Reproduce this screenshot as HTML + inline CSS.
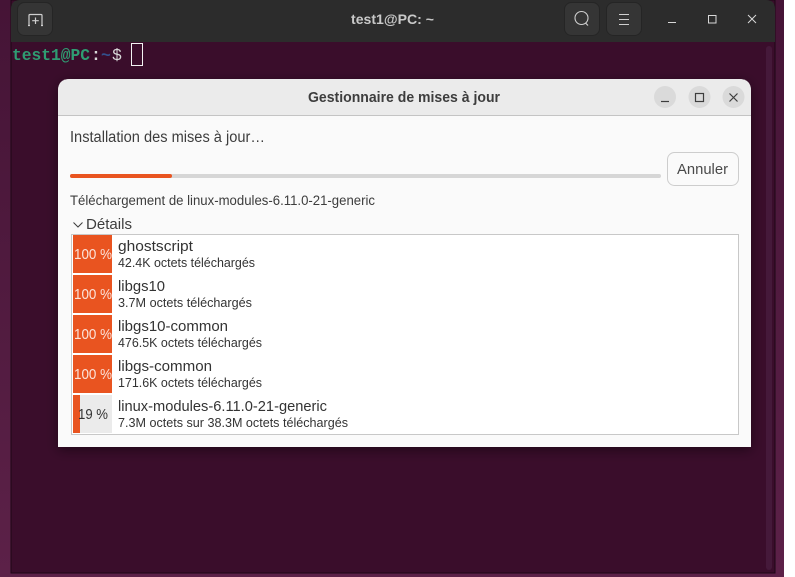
<!DOCTYPE html>
<html lang="fr"><head><meta charset="utf-8"><title>Gestionnaire de mises à jour</title>
<style>
html,body{margin:0;padding:0;background:#fff;width:795px;height:577px;overflow:hidden}
svg{display:block;position:absolute;left:0;top:0}
text{font-family:"Liberation Sans",sans-serif;fill:#3d3d3d}
.m{font-family:"Liberation Mono",monospace;font-size:16.5px;font-weight:bold}
.n{font-size:15px;fill:#333}
.s{font-size:13px;fill:#333}
.p{font-size:15px;fill:#fbe3da}
</style></head><body>
<svg width="795" height="577" viewBox="0 0 795 577" xmlns="http://www.w3.org/2000/svg">
<defs>
<linearGradient id="d" x1="0" x2="0" y1="0" y2="1"><stop offset="0" stop-color="#451436"/><stop offset="1" stop-color="#5c2148"/></linearGradient>
<filter id="sh" x="-10%" y="-10%" width="120%" height="125%"><feDropShadow dx="0" dy="3" stdDeviation="6" flood-color="#000" flood-opacity=".45"/></filter>
</defs>
<rect x="0" y="0" width="784" height="577" fill="url(#d)"/>
<path d="M11 0H775V573H11Z" fill="#3a0d2b" stroke="#1d0716" stroke-width="1"/>
<path d="M11 9Q11 0 20 0H766Q775 0 775 9V42H11Z" fill="#2c2c2c"/>
<rect x="766" y="46" width="6" height="524" rx="3" fill="#45193a"/>

<rect x="17.5" y="2.5" width="35" height="33" rx="7" fill="#353535" stroke="#252525"/>
<path d="M29 25V15.500Q29 14.500 30 14.500H41Q42 14.500 42 15.500V25M28 25.500H30M41 25.500H43M35.500 17.500V24M32.200 20.700H38.800" fill="none" stroke="#cfcfcf" stroke-width="1.2"/>
<text x="351" y="24" font-size="14" font-weight="bold" textLength="83" lengthAdjust="spacingAndGlyphs" style="fill:#c9c9c9">test1@PC: ~</text>
<rect x="564.500" y="2.500" width="35" height="33" rx="7" fill="#353535" stroke="#252525"/>
<rect x="606.500" y="2.500" width="35" height="33" rx="7" fill="#353535" stroke="#252525"/>
<circle cx="581.500" cy="18" r="6.500" fill="none" stroke="#cfcfcf" stroke-width="1.1"/>
<path d="M585.500 23L588 25.500" stroke="#cfcfcf" stroke-width="1.2"/>
<path d="M619 14.500H629M619 19.500H629M619 24.500H629" stroke="#cfcfcf" stroke-width="1"/>
<path d="M668 22.500H676" stroke="#d8d8d8" stroke-width="1"/>
<rect x="708.500" y="15.500" width="7.500" height="7.500" fill="none" stroke="#d8d8d8" stroke-width="1"/>
<path d="M748 15L756 23M756 15L748 23" stroke="#d8d8d8" stroke-width="1"/>

<text class="m" x="12" y="60" textLength="78" lengthAdjust="spacingAndGlyphs" style="fill:#2f9c72">test1@PC</text>
<text class="m" x="91" y="60" style="fill:#d8d8d8">:</text>
<text class="m" x="101" y="60" style="fill:#33508c">~</text>
<text class="m" x="112" y="60" style="fill:#d8d8d8;font-weight:normal">$</text>
<rect x="131.500" y="43.500" width="11" height="22" fill="none" stroke="#f2f2f2" stroke-width="1"/>

<path d="M58 447V91Q58 79 70 79H739Q751 79 751 91V447Z" fill="#fafafa" filter="url(#sh)"/>
<path d="M58 115V91Q58 79 70 79H739Q751 79 751 91V115Z" fill="#ebebeb"/>
<rect x="58" y="115" width="693" height="1" fill="#c4c4c4"/>
<text x="308" y="102" font-size="14.500" font-weight="bold" textLength="192" lengthAdjust="spacingAndGlyphs">Gestionnaire de mises à jour</text>
<circle cx="665" cy="97" r="11" fill="#dadada"/><circle cx="699.500" cy="97" r="11" fill="#dadada"/><circle cx="733.500" cy="97" r="11" fill="#dadada"/>
<path d="M661 101.500H669" stroke="#3d3d3d" stroke-width="1.200"/>
<rect x="695.500" y="93.500" width="8" height="8" fill="none" stroke="#3d3d3d" stroke-width="1.200"/>
<path d="M729.500 93.500L737.500 101.500M737.500 93.500L729.500 101.500" stroke="#3d3d3d" stroke-width="1.200"/>

<text x="70" y="142" font-size="15.500" textLength="195" lengthAdjust="spacingAndGlyphs">Installation des mises à jour…</text>
<rect x="70" y="174" width="591" height="4" rx="2" fill="#d6d6d6"/>
<rect x="70" y="174" width="102" height="4" rx="2" fill="#e95420"/>
<rect x="667.500" y="152.500" width="71" height="33" rx="7" fill="#fafafa" stroke="#cdcdcd"/>
<text x="677" y="174" font-size="15" textLength="51" lengthAdjust="spacingAndGlyphs" style="fill:#4a4a4a">Annuler</text>
<text x="70" y="205" font-size="13.500" textLength="305" lengthAdjust="spacingAndGlyphs">Téléchargement de linux-modules-6.11.0-21-generic</text>
<path d="M73.500 222.500L78 227L82.500 222.500" fill="none" stroke="#3d3d3d" stroke-width="1"/>
<text x="86" y="229" font-size="15" textLength="46" lengthAdjust="spacingAndGlyphs">Détails</text>

<rect x="71.500" y="234.500" width="667" height="200" fill="#fff" stroke="#c8c8c8" stroke-width="1"/>

<rect x="73" y="235" width="39" height="38" fill="#e95420"/>
<text class="p" x="74" y="259" textLength="38" lengthAdjust="spacingAndGlyphs">100 %</text>
<text class="n" x="118" y="251" textLength="75" lengthAdjust="spacingAndGlyphs">ghostscript</text>
<text class="s" x="118" y="267" textLength="137" lengthAdjust="spacingAndGlyphs">42.4K octets téléchargés</text>

<rect x="73" y="275" width="39" height="38" fill="#e95420"/>
<text class="p" x="74" y="299" textLength="38" lengthAdjust="spacingAndGlyphs">100 %</text>
<text class="n" x="118" y="291" textLength="47" lengthAdjust="spacingAndGlyphs">libgs10</text>
<text class="s" x="118" y="307" textLength="134" lengthAdjust="spacingAndGlyphs">3.7M octets téléchargés</text>

<rect x="73" y="315" width="39" height="38" fill="#e95420"/>
<text class="p" x="74" y="339" textLength="38" lengthAdjust="spacingAndGlyphs">100 %</text>
<text class="n" x="118" y="331" textLength="110" lengthAdjust="spacingAndGlyphs">libgs10-common</text>
<text class="s" x="118" y="347" textLength="144" lengthAdjust="spacingAndGlyphs">476.5K octets téléchargés</text>

<rect x="73" y="355" width="39" height="38" fill="#e95420"/>
<text class="p" x="74" y="379" textLength="38" lengthAdjust="spacingAndGlyphs">100 %</text>
<text class="n" x="118" y="371" textLength="94" lengthAdjust="spacingAndGlyphs">libgs-common</text>
<text class="s" x="118" y="387" textLength="144" lengthAdjust="spacingAndGlyphs">171.6K octets téléchargés</text>

<rect x="73" y="395" width="39" height="38" fill="#ebebeb"/>
<rect x="73" y="395" width="7" height="38" fill="#e95420"/>
<text x="78" y="419" font-size="15" textLength="30" lengthAdjust="spacingAndGlyphs" style="fill:#333">19 %</text>
<text class="n" x="118" y="411" textLength="209" lengthAdjust="spacingAndGlyphs">linux-modules-6.11.0-21-generic</text>
<text class="s" x="118" y="427" textLength="230" lengthAdjust="spacingAndGlyphs">7.3M octets sur 38.3M octets téléchargés</text>
</svg>
</body></html>
